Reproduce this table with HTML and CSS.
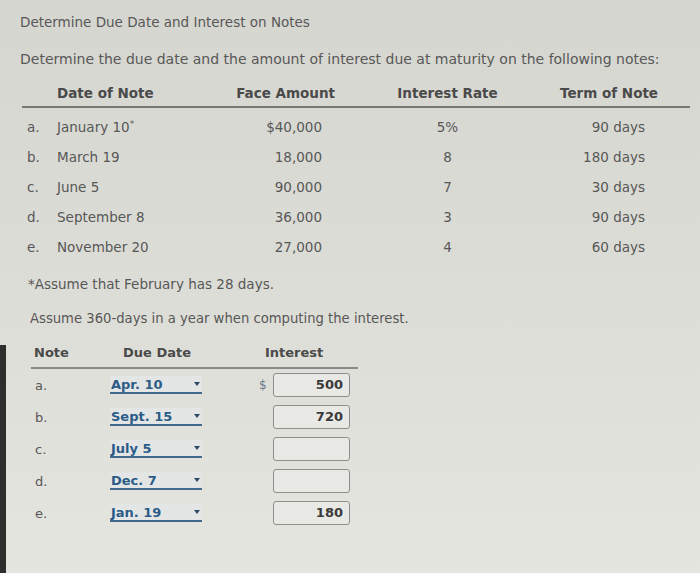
FILE: index.html
```html
<!DOCTYPE html>
<html lang="en">
<head>
<meta charset="utf-8">
<title>Determine Due Date and Interest on Notes</title>
<link rel="stylesheet" href="styles.css">
</head>
<body>
<div class="page">
  <div class="title">Determine Due Date and Interest on Notes</div>
  <div class="intro">Determine the due date and the amount of interest due at maturity on the following notes:</div>

  <div class="notes">
    <div class="nrow head">
      <span class="c-let"></span>
      <span class="c-date">Date of Note</span>
      <span class="c-amt">Face Amount</span>
      <span class="c-rate">Interest Rate</span>
      <span class="c-term">Term of Note</span>
    </div>
    <div class="nrow">
      <span class="c-let">a.</span>
      <span class="c-date">January 10<sup>*</sup></span>
      <span class="c-amt">$40,000</span>
      <span class="c-rate">5%</span>
      <span class="c-term">90 days</span>
    </div>
    <div class="nrow">
      <span class="c-let">b.</span>
      <span class="c-date">March 19</span>
      <span class="c-amt">18,000</span>
      <span class="c-rate">8</span>
      <span class="c-term">180 days</span>
    </div>
    <div class="nrow">
      <span class="c-let">c.</span>
      <span class="c-date">June 5</span>
      <span class="c-amt">90,000</span>
      <span class="c-rate">7</span>
      <span class="c-term">30 days</span>
    </div>
    <div class="nrow">
      <span class="c-let">d.</span>
      <span class="c-date">September 8</span>
      <span class="c-amt">36,000</span>
      <span class="c-rate">3</span>
      <span class="c-term">90 days</span>
    </div>
    <div class="nrow">
      <span class="c-let">e.</span>
      <span class="c-date">November 20</span>
      <span class="c-amt">27,000</span>
      <span class="c-rate">4</span>
      <span class="c-term">60 days</span>
    </div>
  </div>

  <div class="foot">*Assume that February has 28 days.</div>
  <div class="assume">Assume 360-days in a year when computing the interest.</div>

  <div class="lower">
    <div class="answers">
      <div class="arow head">
        <span class="a-let">Note</span>
        <span class="a-due">Due Date</span>
        <span class="a-int">Interest</span>
      </div>
      <div class="arow">
        <span class="a-let">a.</span>
        <span class="a-due"><span class="pick">Apr. 10<i class="caret"></i></span></span>
        <span class="a-int"><span class="cur">$</span><span class="box">500</span></span>
      </div>
      <div class="arow">
        <span class="a-let">b.</span>
        <span class="a-due"><span class="pick">Sept. 15<i class="caret"></i></span></span>
        <span class="a-int"><span class="cur"></span><span class="box">720</span></span>
      </div>
      <div class="arow">
        <span class="a-let">c.</span>
        <span class="a-due"><span class="pick">July 5<i class="caret"></i></span></span>
        <span class="a-int"><span class="cur"></span><span class="box"></span></span>
      </div>
      <div class="arow">
        <span class="a-let">d.</span>
        <span class="a-due"><span class="pick">Dec. 7<i class="caret"></i></span></span>
        <span class="a-int"><span class="cur"></span><span class="box"></span></span>
      </div>
      <div class="arow">
        <span class="a-let">e.</span>
        <span class="a-due"><span class="pick">Jan. 19<i class="caret"></i></span></span>
        <span class="a-int"><span class="cur"></span><span class="box">180</span></span>
      </div>
    </div>
  </div>
</div>
</body>
</html>
```
FILE: styles.css
```css
html, body {
  margin: 0;
  padding: 0;
}
body {
  width: 700px;
  height: 573px;
  overflow: hidden;
  background: linear-gradient(180deg, #d6d6d0 0%, #dcdcd6 45%, #e5e5df 100%);
  font-family: "DejaVu Sans", Verdana, sans-serif;
  font-size: 13.5px;
  color: #575757;
}
.page {
  display: flex;
  flex-direction: column;
  height: 573px;
}
.title {
  padding: 14px 0 0 20px;
  line-height: 16px;
  color: #585858;
}
.intro {
  padding: 21px 0 0 20px;
  line-height: 16px;
  font-size: 14px;
  color: #585858;
  white-space: nowrap;
}
.notes {
  margin: 18px 0 0 22px;
  width: 668px;
}
.nrow {
  display: grid;
  grid-template-columns: 35px 143px 135px 225px 130px;
  height: 30px;
  align-items: center;
  white-space: nowrap;
}
.nrow.head {
  height: 21px;
  font-weight: bold;
  color: #4a4a4a;
  border-bottom: 2px solid #777;
  align-items: start;
  margin-bottom: 4px;
}
.c-let { padding-left: 5px; }
.c-amt { text-align: right; padding-right: 13px; }
.c-rate { text-align: center; }
.c-term { text-align: right; padding-right: 45px; }
.head .c-amt { padding-right: 0; }
.head .c-term { padding-right: 32px; }
sup {
  font-size: 9px;
  vertical-align: 5px;
  line-height: 0;
}
.foot {
  padding: 14px 0 0 28px;
  line-height: 16px;
}
.assume {
  padding: 19px 0 0 30px;
  line-height: 16px;
  font-size: 13.2px;
}
.lower {
  flex: 1;
  margin-top: 18px;
  border-left: 6px solid #2e2e2e;
  padding-left: 25px;
  font-size: 13px;
}
.answers {
  width: 327px;
}
.arow {
  display: grid;
  grid-template-columns: 74px 153px 100px;
  height: 32px;
  align-items: center;
  white-space: nowrap;
}
.arow.head {
  height: 22px;
  align-items: start;
  font-weight: bold;
  color: #4a4a4a;
  border-bottom: 2px solid #888;
}
.a-let { padding-left: 4px; }
.head .a-let { padding-left: 3px; }
.head .a-due { padding-left: 18px; }
.head .a-int { padding-left: 7px; }
.pick {
  display: flex;
  align-items: center;
  justify-content: space-between;
  margin-left: 5px;
  width: 92px;
  height: 18px;
  box-sizing: border-box;
  padding: 0 2px 0 1px;
  background: #e4e6e6;
  border-bottom: 2px solid #3f6a8c;
  color: #2c5b86;
  font-weight: bold;
  font-size: 13px;
}
.caret {
  width: 0;
  height: 0;
  border-left: 3px solid transparent;
  border-right: 3px solid transparent;
  border-top: 4px solid #2c4a66;
}
.a-int {
  display: flex;
  align-items: center;
}
.cur {
  width: 15px;
  padding-left: 1px;
  box-sizing: border-box;
  color: #6a7a8a;
  font-size: 12px;
}
.box {
  display: block;
  width: 77px;
  height: 24px;
  box-sizing: border-box;
  border: 1px solid #8e8e8e;
  border-radius: 3px;
  background: #e8e8e4;
  text-align: right;
  padding-right: 6px;
  line-height: 22px;
  font-weight: bold;
  color: #3a3a3a;
}
```
